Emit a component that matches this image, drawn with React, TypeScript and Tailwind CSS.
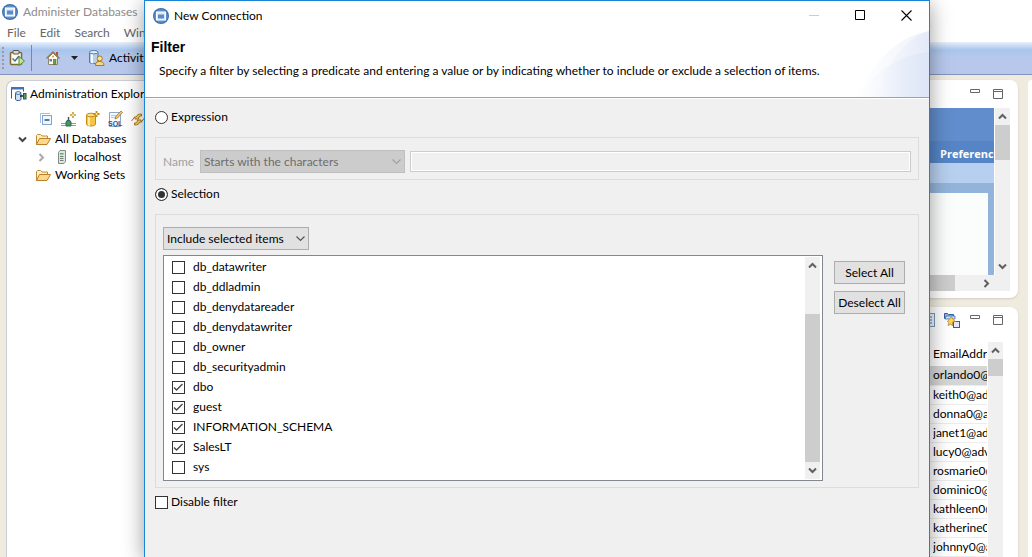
import type { ReactNode } from "react"
import { clsx } from "clsx"

const roles = [
    { name: "db_datawriter", checked: false },
    { name: "db_ddladmin", checked: false },
    { name: "db_denydatareader", checked: false },
    { name: "db_denydatawriter", checked: false },
    { name: "db_owner", checked: false },
    { name: "db_securityadmin", checked: false },
    { name: "dbo", checked: true },
    { name: "guest", checked: true },
    { name: "INFORMATION_SCHEMA", checked: true },
    { name: "SalesLT", checked: true },
    { name: "sys", checked: false },
]

const emails = [
    "orlando0@adventure-works.com",
    "keith0@adventure-works.com",
    "donna0@adventure-works.com",
    "janet1@adventure-works.com",
    "lucy0@adventure-works.com",
    "rosmarie0@adventure-works.com",
    "dominic0@adventure-works.com",
    "kathleen0@adventure-works.com",
    "katherine0@adventure-works.com",
    "johnny0@adventure-works.com",
]

const AppIcon = () => (
    <svg className="size-4 shrink-0" viewBox="0 0 16 16">
        <circle cx="8" cy="8" r="8" fill="#3c70ad" />
        <circle cx="8" cy="8" r="6.8" fill="#5f92cb" />
        <rect x="3.5" y="4" width="9" height="8" fill="#dce9f6" stroke="#fff" />
        <rect x="5" y="6.5" width="6" height="4" fill="#5b8cc8" />
    </svg>
)

const Chevron = ({ dir, className }: { dir: "up" | "down" | "right", className?: string }) => (
    <svg className={clsx("size-[9px] shrink-0", className)} viewBox="0 0 9 9" fill="none" stroke="currentColor" strokeWidth="2">
        {dir === "up" && <path d="M1 6.5 4.5 3 8 6.5" />}
        {dir === "down" && <path d="M1 2.5 4.5 6 8 2.5" />}
        {dir === "right" && <path d="M2.5 1 6 4.5 2.5 8" />}
    </svg>
)

const FolderIcon = () => (
    <svg className="h-[13px] w-4 shrink-0" viewBox="0 0 16 13">
        <path d="M1.5 11.5V2.5l1-1h3l1.5 1.5h5.5v2.5" fill="#fdf0c0" stroke="#c08a35" />
        <path d="M1.5 11.5 4.5 5.5h11l-3.500 6z" fill="#fbd98c" stroke="#b9802c" />
    </svg>
)

const ClipboardIcon = () => (
    <svg className="size-[18px]" viewBox="0 0 18 18">
        <rect x="2.5" y="3.5" width="11" height="12" rx="1" fill="#fffbe8" stroke="#7c6a35" strokeWidth="1.5" />
        <rect x="5" y="1.5" width="6" height="3.5" rx="1" fill="#d8d8d8" stroke="#555" />
        <path d="M4.5 9.5 7 12l4-5" fill="none" stroke="#4a6d9b" strokeWidth="1.5" />
        <path d="M11 7.5v9l5.5-4.500z" fill="#c5e49a" stroke="#4f8e34" />
    </svg>
)

const HomeIcon = () => (
    <svg className="size-4" viewBox="0 0 16 16">
        <path d="M11 2h2v4h-2z" fill="#b94d3c" />
        <path d="M3.5 7.5v7h9v-7L8 3z" fill="#fffbe9" stroke="#8d8571" />
        <path d="M1.5 8.5 8 2l6.5 6.5" fill="none" stroke="#94795a" strokeWidth="1.5" />
        <rect x="4.5" y="9" width="2.5" height="2.5" fill="#4e86be" />
        <rect x="8.5" y="9.5" width="2.5" height="5" fill="#6d9b53" stroke="#4e6c3a" strokeWidth=".6" />
        <circle cx="8" cy="6.5" r="1" fill="#d19a3c" />
    </svg>
)

const ActivityIcon = () => (
    <svg className="size-4" viewBox="0 0 16 16">
        <path d="M.5 2.5v10c1.5 1.5 7 1.5 8.5 0v-10" fill="#b7d0ea" stroke="#4f79ab" />
        <path d="M2 4v9l2 .5V4z" fill="#f7fbff" />
        <ellipse cx="4.75" cy="2.2" rx="4.25" ry="1.7" fill="#e7f0fa" stroke="#4f79ab" />
        <path d="M6.5 15.5c0-3 1.5-4 4-4s4.5 1 4.5 4z" fill="#f6d984" stroke="#ab7a1c" />
        <circle cx="10.8" cy="8.5" r="2.5" fill="#fae6a4" stroke="#ab7a1c" />
    </svg>
)

const ExplorerIcon = () => (
    <svg className="size-4 shrink-0" viewBox="0 0 16 16">
        <path d="M.5 12.5V1.5h12v4" fill="#fff" stroke="#2d5d9f" />
        <path d="M0 1h13v2.5H0z" fill="#3f73b8" />
        <path d="M4.5 7.5v6c1 1.5 4.5 1.500 5.5 0v-6" fill="#cfe0f2" stroke="#2d5d9f" />
        <ellipse cx="7.25" cy="7" rx="2.75" ry="1.3" fill="#fff" stroke="#2d5d9f" />
        <path d="M9 10h4" stroke="#222" strokeWidth="1.5" />
        <rect x="12.5" y="7.500" width="2.500" height="5.500" fill="#559b6d" stroke="#2b5b3c" />
    </svg>
)

const CollapseIcon = () => (
    <svg className="size-4" viewBox="0 0 16 16">
        <path d="M2.5 12V2.5H12" fill="none" stroke="#a3bfe2" />
        <rect x="4.5" y="4.5" width="9" height="9" fill="#f0f6fd" stroke="#7ea4d4" />
        <path d="M6.5 9h5" stroke="#24507f" strokeWidth="1.5" />
    </svg>
)

const NewConnectionIcon = () => (
    <svg className="size-4" viewBox="0 0 16 16">
        <path d="M0 12.5h15M0 14.5h15" stroke="#9a9a9a" />
        <path d="M7.5 6v4" stroke="#555" strokeWidth="1.5" />
        <path d="M5 15v-4l1-1.500h3l1 1.500v4z" fill="#3f9566" stroke="#2c6b48" />
        <path d="M12 1v6M9 4h6" stroke="#c9982c" strokeWidth="1.600" />
        <path d="M12 3v2M11 4h2" stroke="#fff2b0" />
    </svg>
)

const NewDatabaseIcon = () => (
    <svg className="size-4" viewBox="0 0 16 16">
        <path d="M2.5 4v9.500c1.5 2 7.5 2 9 0V4" fill="#f7c544" stroke="#c78a17" />
        <path d="M4 5.5v9l2 .5V6z" fill="#fdeaa9" />
        <ellipse cx="7" cy="4" rx="4.500" ry="1.800" fill="#fbe08a" stroke="#c78a17" />
        <path d="M12.5 0v6M9.5 3h6" stroke="#c78a17" strokeWidth="1.800" />
        <path d="M12.5 2v2M11.5 3h2" stroke="#fff2b0" />
    </svg>
)

const SqlIcon = () => (
    <svg className="size-4" viewBox="0 0 16 16">
        <path d="M2.5 15.5V1.5h11v14z" fill="#f7fafe" stroke="#90a6c4" />
        <path d="M4 4.5h5M4 6.5h4" stroke="#b5c7de" />
        <path d="m8 8 1-3 5-5 1.5 1.5L10.5 7z" fill="#f0c46d" stroke="#8b6d3a" strokeWidth=".7" />
        <text x="1" y="14.5" fontSize="7" fontWeight="bold" fontFamily="Liberation Sans, sans-serif" fill="#234f93">SQL</text>
    </svg>
)

const LinkIcon = () => (
    <svg className="size-4" viewBox="0 0 16 16" fill="#f7d36a" stroke="#ae7a16">
        <path d="M1.5 10 5 5.5V8h3.5c0-2 1-3 3-3v-2c-3 0-4.500 1-5.500 3" />
        <path d="M14.5 7 11 11.5V9H7.5c0 2-1 3-3 3v2c3 0 4.500-1 5.500-3" />
    </svg>
)

const ServerIcon = () => (
    <svg className="h-[14px] w-[10px] shrink-0" viewBox="0 0 10 14">
        <path d="M1.500 2.5 3 .5h5.500v11l-1.500 2H1.500z" fill="#dfe5e1" stroke="#818a84" />
        <path d="M3 6.5h3.500M3 8.5h3.500M3 10.5h3.500" stroke="#737d76" />
        <path d="M3 3h3.500v1.500H3z" fill="#3dbb4d" />
    </svg>
)

const TableIcon = () => (
    <svg className="size-4" viewBox="0 0 16 16">
        <rect x=".5" y="1.5" width="14" height="13" fill="#eef4fb" stroke="#7b98bd" />
        <path d="M3 5h9M3 8h9M3 11h9" stroke="#5379ab" />
    </svg>
)

const MoveFolderIcon = () => (
    <svg className="size-4" viewBox="0 0 16 16">
        <path d="M.5 6.5v-5h3l1 1h5v4z" fill="#8fb6e1" stroke="#2f60a0" />
        <path d="M2 4h9v3H1z" fill="#cfe1f4" stroke="#2f60a0" strokeWidth=".7" />
        <rect x="9.5" y="9.5" width="6" height="6" fill="#dfebf8" stroke="#2f60a0" />
        <path d="m3.500 9.500 4-5 1 2.500 3 2.500-3 .5V14l-1.500-2-3 1.500 1-3z" fill="#fbd560" stroke="#bd851b" strokeWidth=".8" />
    </svg>
)

const WindowButtons = () => (
    <>
        <button aria-label="Minimize view" className="flex h-[10px]">
            <svg className="h-[5px] w-[11px]" viewBox="0 0 11 5"><path d="M.5.5h9v3h-9z" fill="#fff" stroke="#666" /></svg>
        </button>
        <button aria-label="Maximize view">
            <svg className="size-[11px]" viewBox="0 0 11 11"><path d="M.5.5h9v9h-9zM.5 2.5h9" fill="#fff" stroke="#666" /></svg>
        </button>
    </>
)

const ScrollBar = ({ children }: { children: ReactNode }) => (
    <div className="flex w-[15px] shrink-0 flex-col items-center bg-[#f0f0f0] text-[#606060]">
        {children}
    </div>
)

const CheckBox = ({ id, label, checked, className }: { id: string, label: string, checked?: boolean, className?: string }) => (
    <div className={clsx("flex h-5 items-center", className)}>
        <span className="relative flex">
            <input id={id} type="checkbox" defaultChecked={checked} className="peer size-[13px] appearance-none border border-[#333] bg-white" />
            <svg className="pointer-events-none absolute inset-0 hidden size-[13px] peer-checked:block" viewBox="0 0 13 13">
                <path d="M2 6.500 4.500 9l6-6" fill="none" stroke="#444" strokeWidth="1.300" />
            </svg>
        </span>
        <label htmlFor={id}>{label}</label>
    </div>
)

const Radio = ({ id, label, checked }: { id: string, label: string, checked?: boolean }) => (
    <div className="flex h-5 items-center gap-[3px]">
        <input
            id={id}
            type="radio"
            name="mode"
            defaultChecked={checked}
            className="size-[13px] appearance-none rounded-full border border-[#333] bg-white checked:bg-[#333] checked:shadow-[inset_0_0_0_2px_white]"
        />
        <label htmlFor={id}>{label}</label>
    </div>
)

const Explorer = () => (
    <section className="w-[280px] shrink-0 rounded-tl-lg border-t border-l border-[#c9ced8] bg-white">
        <h2 className="flex h-[26px] items-center gap-[3px] pl-1">
            <ExplorerIcon />
            Administration Explorer
        </h2>
        <div className="flex h-[23px] items-center gap-[7px] pl-[31px]">
            <button aria-label="Collapse all"><CollapseIcon /></button>
            <button aria-label="New connection"><NewConnectionIcon /></button>
            <button aria-label="New database"><NewDatabaseIcon /></button>
            <button aria-label="New SQL script"><SqlIcon /></button>
            <button aria-label="Link with editor"><LinkIcon /></button>
        </div>
        <ul>
            <li className="flex h-[18px] items-center pl-[11px]">
                <Chevron dir="down" className="mr-2 text-[#444]" />
                <FolderIcon />
                <span className="ml-1">All Databases</span>
            </li>
            <li className="flex h-[18px] items-center pl-[30px]">
                <Chevron dir="right" className="mr-[11px] text-[#aaa]" />
                <ServerIcon />
                <span className="ml-[7px]">localhost</span>
            </li>
            <li className="flex h-[18px] items-center pl-7">
                <FolderIcon />
                <span className="ml-1">Working Sets</span>
            </li>
        </ul>
    </section>
)

const EditorPanel = () => (
    <section className="flex h-[218px] flex-col rounded-r-lg bg-white pr-2 pb-[7px] shadow-sm">
        <div className="flex h-7 shrink-0 items-center justify-end gap-3 pr-[6px]">
            <WindowButtons />
        </div>
        <div className="flex flex-1">
            <div className="flex flex-1 flex-col">
                <div className="mr-px flex flex-1 flex-col bg-[#92b4da]">
                    <div className="h-[33px] bg-[#618dcc]" />
                    <div className="flex h-[22px] items-center justify-end bg-[#5585c6]">
                        <span className="w-[54px] overflow-hidden pt-1 font-['Open_Sans','Noto_Sans',sans-serif] text-[11px] font-bold text-white">Preferences</span>
                    </div>
                    <div className="h-5 bg-[#b7d0ef]" />
                    <div className="mt-[10px] mr-[6px] flex-1 bg-[#fafdfc]" />
                </div>
                <div className="flex h-4 items-center justify-end bg-[#f0f0f0] text-[#606060]">
                    <div className="h-full flex-1 bg-[#cdcdcd]" />
                    <div className="flex w-10 justify-end pr-1"><Chevron dir="right" /></div>
                </div>
            </div>
            <ScrollBar>
                <Chevron dir="up" className="mt-1" />
                <div className="mt-1 h-[35px] w-full bg-[#cdcdcd]" />
                <Chevron dir="down" className="mt-auto mb-5" />
            </ScrollBar>
        </div>
    </section>
)

const ResultsPanel = () => (
    <section className="mt-[9px] flex flex-1 flex-col overflow-hidden rounded-tr-lg bg-white pr-[14px] shadow-sm">
        <div className="flex h-[35px] shrink-0 items-center justify-end pb-[9px]">
            <button aria-label="Show as table" className="mr-2"><TableIcon /></button>
            <button aria-label="Move result" className="mr-[10px]"><MoveFolderIcon /></button>
            <div className="flex gap-3"><WindowButtons /></div>
        </div>
        <div className="mr-px flex flex-1 overflow-hidden">
            <div className="mr-px flex-1 overflow-hidden">
                <table className="w-full table-fixed border-collapse">
                    <thead>
                        <tr className="h-6">
                            <th />
                            <th className="w-[54px] overflow-hidden text-left font-normal text-clip">EmailAddress</th>
                        </tr>
                    </thead>
                    <tbody>
                        {emails.map((email, i) => (
                            <tr key={email} className={clsx("h-[19px] border-b border-[#ececec]", i === 0 && "bg-[#d6d6d6]")}>
                                <td />
                                <td className="overflow-hidden whitespace-nowrap">{email}</td>
                            </tr>
                        ))}
                    </tbody>
                </table>
            </div>
            <ScrollBar>
                <Chevron dir="up" className="mt-1" />
                <div className="mt-1 h-[17px] w-full bg-[#cdcdcd]" />
            </ScrollBar>
        </div>
    </section>
)

const Select = ({ id, options, disabled, className }: { id: string, options: string[], disabled?: boolean, className?: string }) => (
    <div className={clsx("relative h-[23px] shrink-0", className)}>
        <select
            id={id}
            aria-label={id}
            disabled={disabled}
            className="size-full appearance-none border border-[#adadad] bg-[#e1e1e1] pl-[3px] text-black disabled:border-[#bfbfbf] disabled:bg-[#ccc] disabled:text-[#6d6d6d] disabled:opacity-100"
        >
            {options.map((option) => <option key={option}>{option}</option>)}
        </select>
        <svg
            className={clsx("pointer-events-none absolute top-[7px] right-1 size-[9px]", disabled ? "text-[#a0a0a0]" : "text-[#555]")}
            viewBox="0 0 9 9"
            fill="none"
            stroke="currentColor"
            strokeWidth="1.200"
        >
            <path d="M.5 2.5 4.500 6.500l4-4" />
        </svg>
    </div>
)

const DialogHeader = () => (
    <header className="relative h-[97px] border-b border-[#a0a0a0] bg-white">
        <svg className="absolute right-0 bottom-0 h-[66px] w-[72px]" viewBox="0 0 72 66">
            <defs>
                <linearGradient id="swoosh" x1="0" x2="1" y1="0" y2="0">
                    <stop offset="0" stopColor="#dbe3f6" stopOpacity="0" />
                    <stop offset="1" stopColor="#d3ddf4" stopOpacity=".4" />
                </linearGradient>
            </defs>
            <path d="M0 66C14 34 38 6 72 0v66z" fill="url(#swoosh)" />
            <path d="M30 38C40 20 55 5 72 0v66H20z" fill="url(#swoosh)" />
            <path d="M0 66C18 40 42 24 72 21v45z" fill="url(#swoosh)" />
        </svg>
        <div className="relative flex h-[29px] items-center pl-2">
            <AppIcon />
            <h1 className="ml-[5px] flex-1">New Connection</h1>
            <div className="flex items-center gap-[35px] pr-[17px]">
                <button aria-label="Minimize" disabled>
                    <svg className="size-[11px]" viewBox="0 0 11 11"><path d="M0 5.5h10" stroke="#ccc" /></svg>
                </button>
                <button aria-label="Maximize">
                    <svg className="size-[11px]" viewBox="0 0 11 11"><path d="M.5.5h9v9h-9z" fill="none" stroke="#000" /></svg>
                </button>
                <button aria-label="Close">
                    <svg className="size-[11px]" viewBox="0 0 11 11"><path d="m.5.5 10 10m0-10-10 10" stroke="#000" strokeWidth="1.100" /></svg>
                </button>
            </div>
        </div>
        <h2 className="relative mt-[7px] pl-[6px] font-['Liberation_Sans',Arial,sans-serif] text-[14px] leading-5 font-bold">Filter</h2>
        <p className="relative mt-1 pl-[14px] leading-5 whitespace-nowrap">
            Specify a filter by selecting a predicate and entering a value or by indicating whether to include or exclude a selection of items.
        </p>
    </header>
)

const DialogBody = () => (
    <form className="flex-1 border-t border-white bg-[#f0f0f0] pt-2 pr-[10px] pl-[10px]">
        <Radio id="expression" label="Expression" />
        <div className="mt-[10px] flex h-[43px] items-center border border-[#dcdcdc] px-[7px] pt-[6px]">
            <label htmlFor="value" className="w-[37px] text-[#a0a0a0]">Name</label>
            <Select id="predicate" options={["Starts with the characters"]} disabled className="w-[205px]" />
            <input id="value" disabled className="ml-[5px] h-[21px] min-w-0 flex-1 border border-[#ccc] bg-[#f0f0f0] shadow-[inset_0_0_0_1px_white]" />
        </div>
        <div className="mt-1">
            <Radio id="selection" label="Selection" checked />
        </div>
        <div className="mt-[10px] border border-[#dcdcdc] px-[7px] pt-3 pb-[6px]">
            <Select id="inclusion" options={["Include selected items", "Exclude selected items"]} className="w-[146px]" />
            <div className="mt-[5px] flex gap-[11px]">
                <div className="flex h-[226px] flex-1 border border-[#828790] bg-white py-px pr-[2px]">
                    <div className="flex-1 overflow-hidden">
                        {roles.map((role) => (
                            <CheckBox key={role.name} id={role.name} label={role.name} checked={role.checked} className="gap-2 pl-2" />
                        ))}
                    </div>
                    <ScrollBar>
                        <Chevron dir="up" className="mt-1" />
                        <div className="mt-11 w-full flex-1 bg-[#cdcdcd]" />
                        <Chevron dir="down" className="my-1" />
                    </ScrollBar>
                </div>
                <div className="mt-[6px] mr-[6px] flex w-[71px] flex-col gap-[7px]">
                    <button type="button" className="h-[23px] border border-[#adadad] bg-[#e1e1e1] whitespace-nowrap">Select All</button>
                    <button type="button" className="h-[23px] border border-[#adadad] bg-[#e1e1e1] whitespace-nowrap">Deselect All</button>
                </div>
            </div>
        </div>
        <CheckBox id="disable" label="Disable filter" className="mt-1 gap-[3px]" />
    </form>
)

export default function App() {
    return (
        <div className="relative flex h-screen flex-col overflow-hidden bg-white font-[Lato,'Open_Sans',sans-serif] text-[12px] leading-4 text-black">
            <div className="flex h-6 items-center gap-[5px] pl-[2px] text-[#8c8c8c]">
                <AppIcon />
                Administer Databases
            </div>
            <nav className="flex h-[18px] items-center gap-[14px] pl-[7px] text-[#666]">
                <button>File</button>
                <button>Edit</button>
                <button>Search</button>
                <button>Window</button>
                <button>Help</button>
            </nav>
            <div className="flex h-[33px] shrink-0 items-center border-b border-[#8094bf] bg-linear-to-b from-[#e8effa] via-[#a8c5ed] via-25% to-[#b7c8ec] to-45%">
                <div className="ml-[2px] h-[22px] border-l-2 border-dotted border-[#9a9a9a]" />
                <button aria-label="Tasks" className="ml-1"><ClipboardIcon /></button>
                <div className="ml-[5px] h-[26px] w-px bg-[#7188b5]" />
                <button aria-label="Home" className="ml-[13px]"><HomeIcon /></button>
                <button aria-label="Home options" className="ml-[10px]">
                    <svg className="h-1 w-[7px]" viewBox="0 0 7 4"><path d="M0 0h7L3.500 4z" fill="#222" /></svg>
                </button>
                <button className="ml-[11px] flex items-center gap-1 text-black">
                    <ActivityIcon />
                    Activity
                </button>
            </div>
            <main className="flex flex-1 overflow-hidden bg-[#efebdf] pt-[5px] pl-[6px]">
                <Explorer />
                <div className="ml-[9px] flex min-w-0 flex-1 flex-col">
                    <EditorPanel />
                    <ResultsPanel />
                </div>
                <div className="ml-[10px] w-1 rounded-tl-lg bg-white" />
            </main>

            <div
                role="dialog"
                aria-label="New Connection"
                className="absolute inset-y-0 right-[102px] left-36 flex flex-col border-x border-t border-[#1883d7] shadow-[0_4px_20px_rgba(0,0,0,0.4)]"
            >
                <DialogHeader />
                <DialogBody />
            </div>
        </div>
    )
}
